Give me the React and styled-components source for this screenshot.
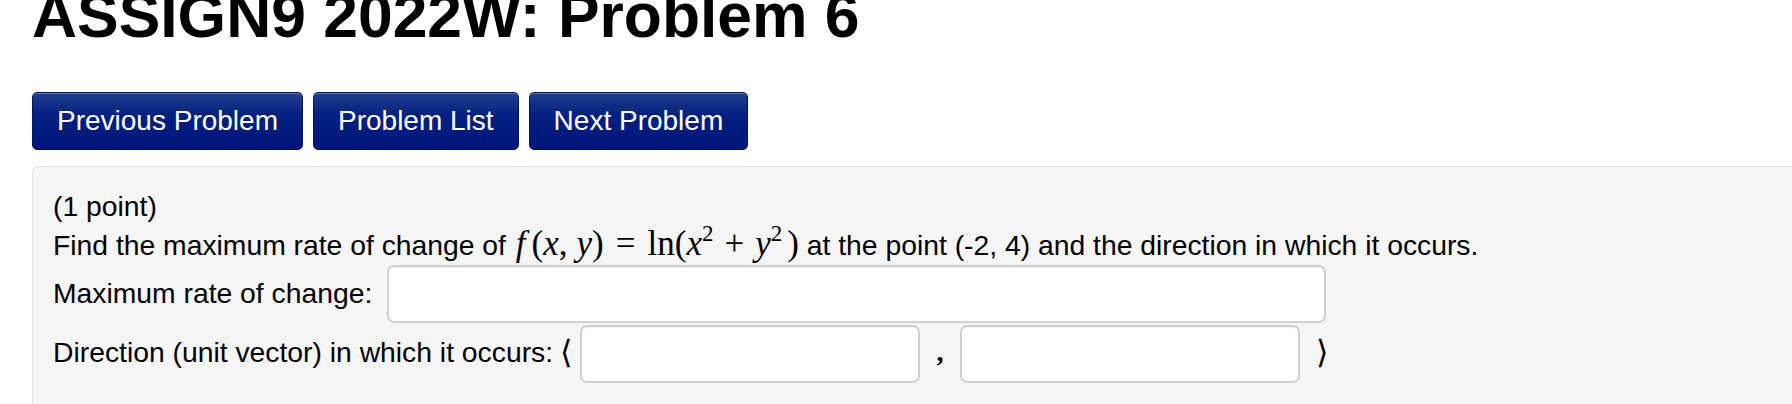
import React from "react";
import styled, { createGlobalStyle } from "styled-components";

const GlobalStyle = createGlobalStyle`
  html, body {
    margin: 0;
    padding: 0;
    background: #fff;
    overflow: hidden;
  }
  body {
    font-family: "Liberation Sans", Arial, Helvetica, sans-serif;
    color: #000;
  }
`;

const Page = styled.div`
  padding-left: 32px;
`;

const Title = styled.h1`
  margin: -15px 0 0 0;
  font-size: 62.4px;
  line-height: 62px;
  font-weight: 700;
  color: #000;
  white-space: nowrap;
`;

const NavBar = styled.div`
  display: flex;
  gap: 10px;
  margin-top: 45px;
`;

const NavButton = styled.button`
  height: 58px;
  padding: 0 24px;
  border: 1px solid #001460;
  border-radius: 5px;
  background: linear-gradient(#1f3f8e, #04207f 40%, #00157e);
  box-shadow: inset 0 1px 0 rgba(255, 255, 255, 0.28);
  color: #fff;
  font-family: "Liberation Sans", Arial, sans-serif;
  font-size: 28px;
  cursor: pointer;
`;

// problem body, runs off the right and bottom of the window
const ProblemPanel = styled.div`
  margin-top: 16px;
  margin-right: -10px;
  padding: 20px 0 40px 20px;
  background: #f5f5f5;
  border: 1px solid #e2e2e2;
  border-radius: 6px 0 0 0;
  font-size: 28.3px;
  line-height: 38px;
`;

const Line = styled.div`
  white-space: nowrap;
`;

const AnswerRow = styled.div`
  display: flex;
  align-items: center;
  margin-top: ${(p) => p.$top}px;
  white-space: nowrap;
`;

const Label = styled.span`
  padding-bottom: ${(p) => p.$lift || 0}px;
`;

const AnswerInput = styled.input`
  box-sizing: border-box;
  width: ${(p) => p.$w}px;
  height: 58px;
  margin-left: ${(p) => p.$l || 0}px;
  border: 2px solid #d0d0d0;
  border-radius: 7px;
  background: #fff;
  box-shadow: inset 0 1px 1px rgba(0, 0, 0, 0.06);
  font-size: 24px;
  outline: none;
`;

const Bracket = styled.span`
  font-family: "DejaVu Sans", sans-serif;
  font-size: 32px;
  font-weight: 200;
  margin-left: ${(p) => p.$l || 0}px;
  padding-bottom: 4px;
`;

const Sep = styled.span`
  width: 40px;
  text-align: center;
  font-family: "Liberation Serif", serif;
  font-weight: 700;
  padding-bottom: 4px;
`;

const Math = styled.span`
  font-family: "Liberation Serif", "Times New Roman", serif;
  font-size: 35px;
`;

const Mi = styled.span`
  font-style: italic;
  margin-left: ${(p) => p.$l || 0}px;
`;

const Mo = styled.span`
  margin-left: ${(p) => p.$l || 0}px;
  margin-right: ${(p) => p.$r || 0}px;
`;

const Sup = styled.sup`
  font-size: 23px;
  line-height: 0;
  vertical-align: 14px;
`;

export default function App() {
  return (
    <>
      <GlobalStyle />
      <Page>
        <Title>ASSIGN9 2022W: Problem 6</Title>
        <NavBar>
          <NavButton>Previous Problem</NavButton>
          <NavButton>Problem List</NavButton>
          <NavButton>Next Problem</NavButton>
        </NavBar>
        <ProblemPanel>
          <Line>(1 point)</Line>
          <Line>
            Find the maximum rate of change of{" "}
            <Math>
              <Mi $l={2}>f</Mi>
              <Mo $l={6}>(</Mo>
              <Mi>x</Mi>
              <Mo>,</Mo>
              <Mi $l={9}>y</Mi>
              <Mo>)</Mo>
              <Mo $l={12} $r={12}>=</Mo>
              <Mo>ln</Mo>
              <Mo>(</Mo>
              <Mi>x</Mi>
              <Sup>2</Sup>
              <Mo $l={11} $r={11}>+</Mo>
              <Mi>y</Mi>
              <Sup>2</Sup>
              <Mo $l={5}>)</Mo>
            </Math>{" "}
            at the point (-2, 4) and the direction in which it occurs.
          </Line>
          <AnswerRow $top={1}>
            <Label $lift={3}>Maximum rate of change:</Label>
            <AnswerInput $w={939} $l={15} />
          </AnswerRow>
          <AnswerRow $top={2}>
            <Label $lift={4}>Direction (unit vector) in which it occurs:</Label>
            <Bracket $l={7}>⟨</Bracket>
            <AnswerInput $w={340} $l={8} />
            <Sep>,</Sep>
            <AnswerInput $w={340} />
            <Bracket $l={16}>⟩</Bracket>
          </AnswerRow>
        </ProblemPanel>
      </Page>
    </>
  );
}
